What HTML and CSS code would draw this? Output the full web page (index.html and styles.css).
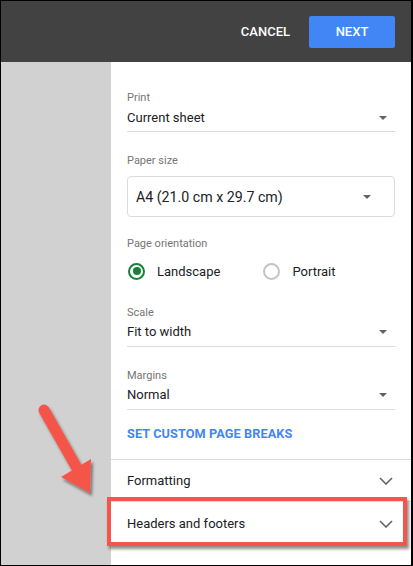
FILE: index.html
```html
<!DOCTYPE html>
<html>
<head>
<meta charset="utf-8">
<link rel="stylesheet" href="styles.css">
</head>
<body>
<div class="frame">
  <div class="topbar">
    <span class="cancel">CANCEL</span>
    <span class="next">NEXT</span>
  </div>
  <div class="main">
    <div class="side"></div>
    <div class="panel">
      <div class="fields">
        <div class="field">
          <div class="label">Print</div>
          <div class="select"><span>Current sheet</span><span class="caret"></span></div>
        </div>
        <div class="field gap21">
          <div class="label">Paper size</div>
          <div class="box"><span>A4 (21.0 cm x 29.7 cm)</span><span class="caret"></span></div>
        </div>
        <div class="field gap19">
          <div class="label">Page orientation</div>
          <div class="radios">
            <div class="radio-opt"><span class="radio on"></span><span>Landscape</span></div>
            <div class="radio-opt"><span class="radio"></span><span>Portrait</span></div>
          </div>
        </div>
        <div class="field gap22">
          <div class="label">Scale</div>
          <div class="select tight"><span>Fit to width</span><span class="caret"></span></div>
        </div>
        <div class="field gap21">
          <div class="label">Margins</div>
          <div class="select tight"><span>Normal</span><span class="caret"></span></div>
        </div>
        <div class="link">SET CUSTOM PAGE BREAKS</div>
      </div>
      <div class="accordion">
        <div class="acc-row first">
          <span>Formatting</span>
          <svg class="chev" width="14" height="8" viewBox="0 0 14 8"><path d="M1 1 L7 7 L13 1" fill="none" stroke="#5f6368" stroke-width="1.6"/></svg>
        </div>
        <div class="acc-row second">
          <span>Headers and footers</span>
          <svg class="chev" width="14" height="8" viewBox="0 0 14 8"><path d="M1 1 L7 7 L13 1" fill="none" stroke="#5f6368" stroke-width="1.6"/></svg>
          <div class="highlight"></div>
        </div>
      </div>
    </div>
  </div>
  <svg class="arrow" width="80" height="110" viewBox="30 395 80 110">
    <defs>
      <filter id="sh" x="-30%" y="-30%" width="160%" height="160%">
        <feDropShadow dx="2" dy="3" stdDeviation="1.5" flood-color="#000" flood-opacity="0.45"/>
      </filter>
    </defs>
    <g filter="url(#sh)" fill="#f5554a">
      <path d="M44 410 L78 470" stroke="#f5554a" stroke-width="11" stroke-linecap="round" fill="none"/>
      <polygon points="61,477 91,459 90,493"/>
    </g>
  </svg>
</div>
</body>
</html>
```

FILE: styles.css
```css
html, body {
  margin: 0;
  padding: 0;
}
body {
  font-family: Roboto, "Liberation Sans", Arial, sans-serif;
}
.frame {
  position: relative;
  width: 413px;
  height: 566px;
  box-sizing: border-box;
  background: #000;
  padding: 1px 2px 1px 1px;
  display: flex;
  flex-direction: column;
}
.topbar {
  height: 61px;
  flex: none;
  background: #424242;
  display: flex;
  justify-content: flex-end;
  align-items: center;
  padding-right: 16px;
}
.cancel {
  color: #fff;
  font-size: 13px;
  font-weight: 500;
  margin-right: 19px;
}
.next {
  width: 86px;
  height: 32px;
  background: #4285f4;
  border-radius: 2px;
  color: #fff;
  font-size: 13px;
  font-weight: 500;
  display: flex;
  align-items: center;
  justify-content: center;
}
.main {
  flex: 1;
  display: flex;
  min-height: 0;
}
.side {
  width: 110px;
  background: #d1d1d1;
  flex: none;
}
.panel {
  flex: 1;
  background: #fff;
  display: flex;
  flex-direction: column;
}
.fields {
  padding: 28px 16px 17px 16px;
}
.gap21 { margin-top: 21px; }
.gap19 { margin-top: 19px; }
.gap22 { margin-top: 22px; }
.label {
  font-size: 11px;
  line-height: 16px;
  color: #757575;
}
.select {
  margin-top: 2px;
  display: flex;
  align-items: center;
  justify-content: space-between;
  font-size: 13px;
  line-height: 20px;
  color: #202124;
  padding-bottom: 3px;
  border-bottom: 1px solid #dadce0;
}
.select.tight {
  margin-top: 1px;
  padding-bottom: 4px;
}
.caret {
  width: 0;
  height: 0;
  border-left: 4px solid transparent;
  border-right: 4px solid transparent;
  border-top: 4px solid #5f6368;
  margin-right: 8px;
}
.box {
  margin-top: 7px;
  height: 39px;
  border: 1px solid #dadce0;
  border-radius: 4px;
  display: flex;
  align-items: center;
  justify-content: space-between;
  padding: 0 15px 0 8px;
  font-size: 14.2px;
  color: #202124;
}
.radios {
  margin-top: 7px;
  height: 24px;
  display: flex;
  align-items: center;
  gap: 42px;
  font-size: 13px;
  color: #202124;
}
.radio-opt {
  display: flex;
  align-items: center;
  gap: 12px;
}
.radio {
  width: 13px;
  height: 13px;
  border: 2px solid #c4c4c4;
  border-radius: 50%;
  margin-left: 1px;
  position: relative;
}
.radio.on {
  border-color: #188038;
}
.radio.on::after {
  content: "";
  position: absolute;
  left: 2.5px;
  top: 2.5px;
  width: 8px;
  height: 8px;
  border-radius: 50%;
  background: #188038;
}
.link {
  margin-top: 16px;
  font-size: 12.7px;
  line-height: 16px;
  font-weight: 700;
  color: #4285f4;
  letter-spacing: 0.1px;
}
.accordion {
  border-top: 1px solid #dadce0;
}
.acc-row {
  position: relative;
  display: flex;
  align-items: center;
  justify-content: space-between;
  padding: 0 18px 0 16px;
  font-size: 13px;
  color: #202124;
}
.acc-row.first {
  height: 41px;
  border-bottom: 1px solid #dadce0;
}
.acc-row.second {
  height: 43px;
}
.chev {
  display: block;
}
.highlight {
  position: absolute;
  left: -4px;
  right: 4px;
  top: -5px;
  bottom: -1px;
  border: 4px solid #f5554a;
  box-shadow: 2px 3px 3px rgba(0, 0, 0, 0.45);
}
.arrow {
  position: absolute;
  left: 30px;
  top: 395px;
}
```
